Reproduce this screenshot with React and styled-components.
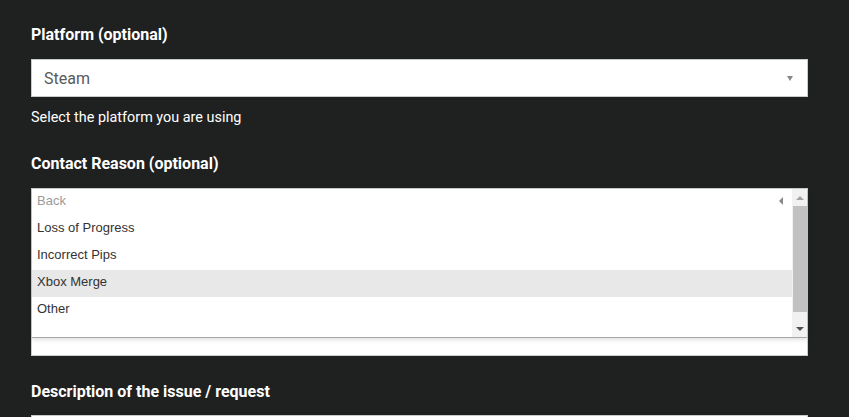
import React from 'react';
import styled, { createGlobalStyle } from 'styled-components';

const GlobalStyle = createGlobalStyle`
  html, body {
    margin: 0;
    padding: 0;
    background: #1f2121;
  }
  body {
    font-family: Roboto, "Liberation Sans", Arial, sans-serif;
  }
`;

const Page = styled.div`
  width: 849px;
  height: 417px;
  overflow: hidden;
  padding: 24px 41px 0 31px;
  box-sizing: border-box;
`;

const Field = styled.div`
  display: flex;
  flex-direction: column;
  margin-bottom: ${(p) => p.gap || 0}px;
`;

const Label = styled.label`
  display: block;
  font-family: Roboto, sans-serif;
  font-weight: 700;
  font-size: 16px;
  line-height: 20px;
  padding-top: 1px;
  color: #fff;
  margin-bottom: ${(p) => p.space || 14}px;
`;

const SelectBox = styled.div`
  position: relative;
  height: 38px;
  box-sizing: border-box;
  background: #fff;
  border: 1px solid #c9cccc;
  display: flex;
  align-items: center;
  padding: 0 12px;
  font-family: Roboto, sans-serif;
  font-size: 16px;
  color: #595959;
`;

const Caret = styled.span`
  margin-left: auto;
  width: 0;
  height: 0;
  border-left: 3px solid transparent;
  border-right: 3px solid transparent;
  border-top: 5px solid #888;
  margin-right: 2px;
`;

const Help = styled.div`
  margin-top: 11px;
  font-size: 14.4px;
  line-height: 20px;
  color: #fff;
`;

const ListBox = styled.div`
  height: 168px;
  box-sizing: border-box;
  background: #fff;
  border: 1px solid #c9cccc;
  display: flex;
  flex-direction: column;
`;

const Menu = styled.div`
  height: 148px;
  display: flex;
  border-bottom: 1px solid #a8a8a8;
  box-shadow: 0 2px 4px rgba(0, 0, 0, 0.12);
`;

const Options = styled.ul`
  flex: 1;
  list-style: none;
  margin: 0;
  padding: 0;
`;

const Option = styled.li`
  height: 27px;
  box-sizing: border-box;
  display: flex;
  align-items: center;
  padding: 0 5px 4px;
  font-family: "Liberation Sans", Arial, sans-serif;
  font-size: 13px;
  color: ${(p) => (p.muted ? '#9a9a9a' : '#333')};
  background: ${(p) => (p.active ? '#e8e8e8' : 'transparent')};
`;

const BackArrow = styled.span`
  margin-left: auto;
  margin-right: 4px;
  width: 0;
  height: 0;
  border-top: 4px solid transparent;
  border-bottom: 4px solid transparent;
  border-right: 4px solid #8a8a8a;
`;

const Scrollbar = styled.div`
  width: 15px;
  background: #f1f1f1;
  display: flex;
  flex-direction: column;
  align-items: center;
`;

const ScrollArrow = styled.div`
  height: 17px;
  display: flex;
  align-items: center;
  justify-content: center;
  &::after {
    content: '';
    border-left: 4px solid transparent;
    border-right: 4px solid transparent;
    ${(p) =>
      p.down
        ? 'border-top: 4px solid #505050;'
        : 'border-bottom: 4px solid #a3a3a3;'}
  }
`;

const Thumb = styled.div`
  width: 14px;
  height: 106px;
  background: #c1c1c1;
`;

const Spacer = styled.div`
  flex: 1;
`;

const TextArea = styled.div`
  height: 40px;
  background: #fff;
  border: 1px solid #c9cccc;
`;

export default function App() {
  return (
    <>
      <GlobalStyle />
      <Page>
        <Field gap={25}>
          <Label>Platform (optional)</Label>
          <SelectBox>
            Steam
            <Caret />
          </SelectBox>
          <Help>Select the platform you are using</Help>
        </Field>
        <Field gap={25}>
          <Label>Contact Reason (optional)</Label>
          <ListBox>
            <Menu>
              <Options>
                <Option muted>
                  Back
                  <BackArrow />
                </Option>
                <Option>Loss of Progress</Option>
                <Option>Incorrect Pips</Option>
                <Option active>Xbox Merge</Option>
                <Option>Other</Option>
              </Options>
              <Scrollbar>
                <ScrollArrow />
                <Thumb />
                <Spacer />
                <ScrollArrow down />
              </Scrollbar>
            </Menu>
          </ListBox>
        </Field>
        <Field>
          <Label space={13}>Description of the issue / request</Label>
          <TextArea />
        </Field>
      </Page>
    </>
  );
}
